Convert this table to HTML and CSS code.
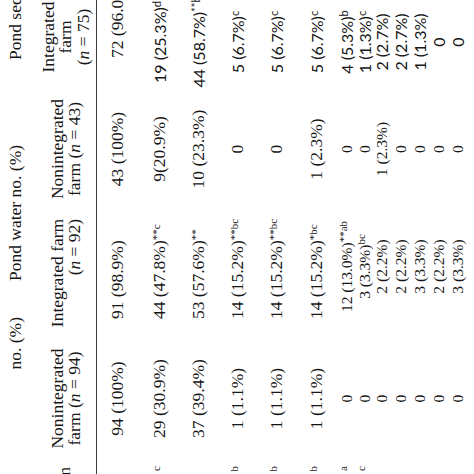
FILE: index.html
```html
<!DOCTYPE html>
<html>
<head>
<meta charset="utf-8">
<title>Table</title>
<link rel="stylesheet" href="styles.css">
</head>
<body>
<div class="viewport">
  <div class="sheet">
    <div class="grid">
      <div class="sp sp1"><span class="sp1-text">no. (%)</span></div>
      <div class="sp sp2"><span>Pond water no. (%)</span></div>
      <div class="sp sp3"><span>Pond sediment no. (%)</span></div>

      <div class="hd hz"><span>farm</span></div>
      <div class="hd"><span>Nonintegrated<br>farm (<i>n</i> = 94)</span></div>
      <div class="hd"><span class="stack"><span>Integrated farm</span><span>(<i>n</i> = 92)</span></span></div>
      <div class="hd"><span>Nonintegrated<br>farm (<i>n</i> = 43)</span></div>
      <div class="hd hdd"><span>Integrated<br>farm<br>(<i>n</i> = 75)</span></div>

      <div class="z"></div>
      <div class="a"><span>94 (100%)</span></div>
      <div class="b"><span>91 (98.9%)</span></div>
      <div class="cc"><span>43 (100%)</span></div>
      <div class="d1"><span>72 (96.0%)</span></div>

      <div class="z"><span><sup>c</sup></span></div>
      <div class="a"><span>29 (30.9%)</span></div>
      <div class="b"><span>44 (47.8%)<sup>**c</sup></span></div>
      <div class="cc"><span>9(20.9%)</span></div>
      <div class="d"><span>19 (25.3%)<sup>d</sup></span></div>

      <div class="z"></div>
      <div class="a"><span>37 (39.4%)</span></div>
      <div class="b"><span>53 (57.6%)<sup>**</sup></span></div>
      <div class="cc"><span>10 (23.3%)</span></div>
      <div class="d"><span>44 (58.7%)<sup>**b</sup></span></div>

      <div class="z"><span><sup>b</sup></span></div>
      <div class="a"><span>1 (1.1%)</span></div>
      <div class="b"><span>14 (15.2%)<sup>**bc</sup></span></div>
      <div class="cc"><span>0</span></div>
      <div class="d"><span>5 (6.7%)<sup>c</sup></span></div>

      <div class="z"><span><sup>b</sup></span></div>
      <div class="a"><span>1 (1.1%)</span></div>
      <div class="b"><span>14 (15.2%)<sup>**bc</sup></span></div>
      <div class="cc"><span>0</span></div>
      <div class="d"><span>5 (6.7%)<sup>c</sup></span></div>

      <div class="z"><span><sup>b</sup></span></div>
      <div class="a"><span>1 (1.1%)</span></div>
      <div class="b"><span>14 (15.2%)<sup>*bc</sup></span></div>
      <div class="cc"><span>1 (2.3%)</span></div>
      <div class="d"><span>5 (6.7%)<sup>c</sup></span></div>

      <div class="z"><span><sup>a</sup></span></div>
      <div class="a sm"><span>0</span></div>
      <div class="b2 sm"><span>12 (13.0%)<sup>**ab</sup></span></div>
      <div class="cc sm"><span>0</span></div>
      <div class="d"><span>4 (5.3%)<sup>b</sup></span></div>

      <div class="z"><span><sup>c</sup></span></div>
      <div class="a sm"><span>0</span></div>
      <div class="b2 sm"><span>3 (3.3%)<sup>bc</sup></span></div>
      <div class="cc sm"><span>0</span></div>
      <div class="d"><span>1 (1.3%)<sup>c</sup></span></div>

      <div class="z"></div>
      <div class="a sm"><span>0</span></div>
      <div class="b2 sm"><span>2 (2.2%)</span></div>
      <div class="cc sm"><span>1 (2.3%)</span></div>
      <div class="d"><span>2 (2.7%)</span></div>

      <div class="z"></div>
      <div class="a sm"><span>0</span></div>
      <div class="b2 sm"><span>2 (2.2%)</span></div>
      <div class="cc sm"><span>0</span></div>
      <div class="d"><span>2 (2.7%)</span></div>

      <div class="z"></div>
      <div class="a sm"><span>0</span></div>
      <div class="b2 sm"><span>3 (3.3%)</span></div>
      <div class="cc sm"><span>0</span></div>
      <div class="d"><span>1 (1.3%)</span></div>

      <div class="z"></div>
      <div class="a sm"><span>0</span></div>
      <div class="b2 sm"><span>2 (2.2%)</span></div>
      <div class="cc sm"><span>0</span></div>
      <div class="d"><span>0</span></div>

      <div class="z"></div>
      <div class="a sm"><span>0</span></div>
      <div class="b2 sm"><span>3 (3.3%)</span></div>
      <div class="cc sm"><span>0</span></div>
      <div class="d"><span>0</span></div>
    </div>
  </div>
</div>
</body>
</html>
```

FILE: styles.css
```css
html, body {
  margin: 0;
  padding: 0;
  background: #ffffff;
}

body {
  font-family: "Liberation Serif", "Times New Roman", serif;
  color: #161616;
}

.viewport {
  width: 474px;
  height: 474px;
  overflow: hidden;
  background: #ffffff;
}

.sheet {
  width: 545px;
  transform-origin: 0 0;
  transform: translate(0, 534px) rotate(-90deg);
}

.grid {
  display: grid;
  grid-template-columns: 74px 123px 128px 120px 100px;
  grid-template-rows: 36px 61px 42px 41px 38px 39px 40px 40px 20px 15px 19px 19px 19px 19px 19px;
  font-size: 17.5px;
  line-height: 17.5px;
}

.grid > div {
  display: flex;
  align-items: center;
  justify-content: center;
  white-space: nowrap;
  box-sizing: border-box;
  text-align: center;
}

sup {
  font-size: 11px;
  line-height: 0;
  vertical-align: 0.5em;
}

/* spanner headers */
.grid > .sp {
  padding-bottom: 4px;
}

.grid > .sp1 {
  grid-column: 1 / 3;
  justify-content: flex-end;
}

.sp1-text {
  margin-right: -20px;
}

.grid > .sp2 {
  grid-column: 3 / 5;
}

.grid > .sp3 {
  justify-content: flex-start;
  padding-left: 29px;
}

/* column headers */
.grid > .hd {
  border-bottom: 1px solid #3a3a3a;
}

.grid > .hz {
  justify-content: flex-end;
  align-items: flex-start;
  padding-top: 20px;
  padding-right: 7px;
}

.grid > .hdd {
  padding-left: 4px;
}

.stack {
  display: inline-flex;
  flex-direction: column;
  align-items: flex-end;
}

/* data cells */
.grid > .z {
  justify-content: flex-end;
  padding-right: 6px;
}

.grid > .b {
  justify-content: flex-start;
  padding-left: 18px;
}

.grid > .b2 {
  padding-left: 13px;
}

.grid > .sm {
  font-size: 15.5px;
}

.grid > .d {
  padding-right: 6px;
  font-family: Lato, "Open Sans", "Liberation Sans", sans-serif;
  font-size: 16px;
}

.grid > .d1 {
  justify-content: flex-start;
  padding-left: 31px;
}
```
